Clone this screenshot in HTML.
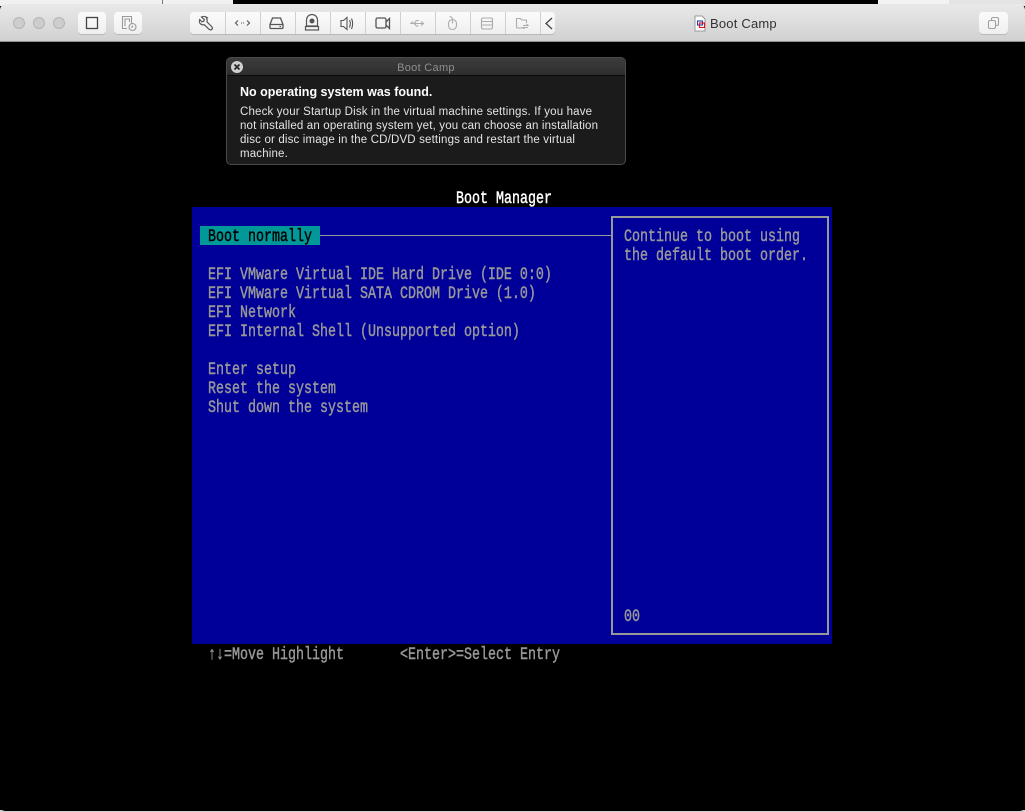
<!DOCTYPE html>
<html>
<head>
<meta charset="utf-8">
<style>
html,body{margin:0;padding:0;background:#000;}
#r{position:relative;width:1025px;height:812px;overflow:hidden;background:#000;font-family:"Liberation Sans",sans-serif;}
.a{position:absolute;}
.t{position:absolute;margin-top:2px;font-family:"Liberation Mono",monospace;font-size:13.334px;line-height:19px;height:19px;white-space:pre;color:#989898;transform:scaleY(1.32);-webkit-text-stroke:.35px currentColor;}
.d{position:absolute;left:240px;font-size:11.5px;letter-spacing:.16px;line-height:14px;height:14px;color:#e4e4e4;white-space:nowrap;}
.btn{position:absolute;top:12px;height:22px;background:linear-gradient(#fbfbfb,#efefef);border-radius:4px;box-shadow:0 1px 0 #b8b8b8;}
.sep{position:absolute;top:12px;height:22px;width:1px;background:#cfcfcf;}
</style>
</head>
<body>
<div id="r">
<div class="a" style="left:0;top:0;width:233px;height:6px;background:#f1f1f1;"></div>
<div class="a" style="left:162px;top:0;width:1px;height:5px;background:#777;"></div>
<div class="a" style="left:878px;top:0;width:89px;height:6px;background:#f3f3f3;"></div>
<div class="a" style="left:949px;top:0;width:76px;height:6px;background:#e4e4e4;"></div>
<div class="a" style="left:0;top:4px;width:1025px;height:37px;background:linear-gradient(#e9e9e9,#d1d1d1);border-radius:6px 6px 0 0;"></div>
<div class="a" style="left:0;top:41px;width:1025px;height:1px;background:#8e8e8e;"></div>
<div class="a" style="left:0;top:810px;width:1025px;height:2px;background:#cfcfcf;"></div>
<div class="a" style="left:0;top:42px;width:1025px;height:769px;background:#000;border-radius:0 0 5px 5px;"></div>

<svg class="a" style="left:0;top:0" width="70" height="42"><g fill="#cdcdcd" stroke="#b4b4b4"><circle cx="19" cy="23" r="5.5"/><circle cx="39" cy="23" r="5.5"/><circle cx="59" cy="23" r="5.5"/></g></svg>

<div class="btn" style="left:78px;width:28px;"></div>
<div class="btn" style="left:114px;width:28px;"></div>
<div class="btn" style="left:190px;width:365px;"></div>
<div class="btn" style="left:979px;width:29px;"></div>
<div class="sep" style="left:225px"></div><div class="sep" style="left:260px"></div><div class="sep" style="left:295px"></div><div class="sep" style="left:330px"></div><div class="sep" style="left:365px"></div><div class="sep" style="left:400px"></div><div class="sep" style="left:435px"></div><div class="sep" style="left:470px"></div><div class="sep" style="left:505px"></div><div class="sep" style="left:540px"></div>

<svg class="a" style="left:0;top:0" width="1025" height="42" fill="none" stroke="#555" stroke-width="1.1">
<rect x="86.5" y="17.5" width="11" height="11" stroke="#444" stroke-width="1.3"/>
<g stroke="#9a9a9a"><path d="M131.5 24V16.5H122.5V28.5H127"/><path d="M125 26V19H129.5V22"/><circle cx="132.5" cy="27" r="3.5"/><path d="M132.5 25.5V27H131"/></g>
<path d="M207 17.5c-1.800-1.500-4.200-1.200-5.500-.5l2.800 2.500-.5 1.800-1.800.5-2.300-2.300c-.7 1.600-.3 3.500 1 4.500 1.200 1 2.500 1 3.500.7l4.800 4.500c1 .9 2.200.9 2.900.1s.6-1.900-.3-2.800l-4.600-4.600c.3-1.400.2-3-.8-4.400z" stroke-width="1.200"/>
<path d="M238 20.5l-2.500 2.500 2.500 2.500M247 20.500l2.500 2.500-2.500 2.500"/><path d="M241 23h.8M243.200 23h.8" stroke-width="1.200"/>
<path d="M272 24.500l2.500-6.500h8l2.500 6.500v3a1 1 0 0 1-1 1h-11a1 1 0 0 1-1-1z M272 24.500h13" stroke-width="1.300" transform="translate(-2 0)"/><path d="M279.500 26.500h1.500"/>
<path d="M306.500 26v-6a5.500 5.500 0 0 1 11 0v6z" stroke-width="1.200"/><circle cx="312" cy="21" r="2" fill="#555"/><rect x="305.500" y="26.500" width="13" height="3.500" stroke-width="1.200"/>
<path d="M341 20.500h2.500l3.500-3v12l-3.500-3H341z"/><path d="M349.500 20c1 2 1 5 0 7.500M351.500 18.500c1.500 3 1.500 7.500 0 10.500"/>
<rect x="376" y="18" width="10" height="10" rx="1.500" stroke-width="1.300"/><path d="M386 22l3.500-3.500v10L386 25" stroke-width="1.300"/>
<g stroke="#ababab"><path d="M410.500 23.500h13M410.500 23.500l2.500-2M414 23.500l2.500-3h2.500M414 23.500l2.500 2.500h2M421 21.500l2.500 2-2.500 2"/>
<rect x="448.500" y="19.500" width="8" height="10" rx="4"/><path d="M452.500 19.500v4M452.500 19.500c0-2-1-2.500-3-3"/>
<rect x="481.500" y="18" width="11" height="11" rx="1.500"/><path d="M481.500 21.500h11M481.500 25h11"/>
<path d="M516.500 28v-9.500h4l1 1.500h5v3M516.500 28h6"/><path d="M523 25.500h5l-1.500-1.500M528 27.500h-5l1.500 1.500"/></g>
<path d="M552 18l-6 5.500 6 5.500" stroke="#444" stroke-width="1.300"/>
<g stroke="#a0a0a0"><rect x="988.500" y="20.500" width="7" height="8" rx="1.500"/><path d="M991.500 20.500v-1.500a1.500 1.500 0 0 1 1.500-1.500h4a1.500 1.500 0 0 1 1.500 1.500v5a1.500 1.500 0 0 1-1.500 1.500h-1.500"/></g>
<path d="M695 16h7l3 3v12h-10z" fill="#fff" stroke="#999" stroke-width="1"/>
<rect x="697.500" y="21" width="5" height="4" stroke="#1d3fa0"/><rect x="699.500" y="23" width="5" height="4.500" stroke="#e0101c"/>
</svg>
<div class="a" style="left:710px;top:15px;font-size:13px;line-height:17px;color:#333;letter-spacing:.2px;white-space:nowrap;">Boot Camp</div>

<div class="a" style="left:192px;top:207px;width:640px;height:437px;background:#000098;"></div>
<div class="a" style="left:200px;top:226px;width:120px;height:19px;background:#009898;"></div>
<div class="a" style="left:320px;top:235px;width:292px;height:1px;background:#989898;"></div>
<div class="a" style="left:611px;top:216px;width:214px;height:415px;border:2px solid #989898;"></div>

<div class="t" style="left:456px;top:188px;color:#fff;">Boot Manager</div>
<div class="t" style="left:208px;top:226px;color:#000;">Boot normally</div>
<div class="t" style="left:208px;top:264px;">EFI VMware Virtual IDE Hard Drive (IDE 0:0)</div>
<div class="t" style="left:208px;top:283px;">EFI VMware Virtual SATA CDROM Drive (1.0)</div>
<div class="t" style="left:208px;top:302px;">EFI Network</div>
<div class="t" style="left:208px;top:321px;">EFI Internal Shell (Unsupported option)</div>
<div class="t" style="left:208px;top:359px;">Enter setup</div>
<div class="t" style="left:208px;top:378px;">Reset the system</div>
<div class="t" style="left:208px;top:397px;">Shut down the system</div>
<div class="t" style="left:624px;top:226px;">Continue to boot using</div>
<div class="t" style="left:624px;top:245px;">the default boot order.</div>
<div class="t" style="left:624px;top:606px;">00</div>
<div class="t" style="left:208px;top:644px;">↑↓=Move Highlight</div>
<div class="t" style="left:400px;top:644px;">&lt;Enter&gt;=Select Entry</div>

<div class="a" style="left:226px;top:57px;width:398px;height:106px;background:#1b1b1b;border:1px solid #4a4a4a;border-radius:5px;"></div>
<div class="a" style="left:227px;top:58px;width:398px;height:17px;background:linear-gradient(#3c3c3c,#2e2e2e);border-bottom:1px solid #0a0a0a;border-radius:4px 4px 0 0;"></div>
<div class="a" style="left:227px;top:61px;width:398px;text-align:center;font-size:11px;line-height:14px;color:#8f8f8f;letter-spacing:.3px;">Boot Camp</div>
<svg class="a" style="left:230px;top:60px" width="14" height="14"><circle cx="7" cy="7" r="6" fill="#d0d0d0"/><path d="M4.500 4.500l5 5M9.500 4.500l-5 5" stroke="#2a2a2a" stroke-width="1.800"/></svg>
<div class="a" style="left:240px;top:84px;font-size:12.5px;line-height:16px;font-weight:bold;color:#fff;white-space:nowrap;">No operating system was found.</div>
<div class="d" style="top:105px;">Check your Startup Disk in the virtual machine settings. If you have</div>
<div class="d" style="top:119px;">not installed an operating system yet, you can choose an installation</div>
<div class="d" style="top:133px;">disc or disc image in the CD/DVD settings and restart the virtual</div>
<div class="d" style="top:147px;">machine.</div>
</div>
</body>
</html>
